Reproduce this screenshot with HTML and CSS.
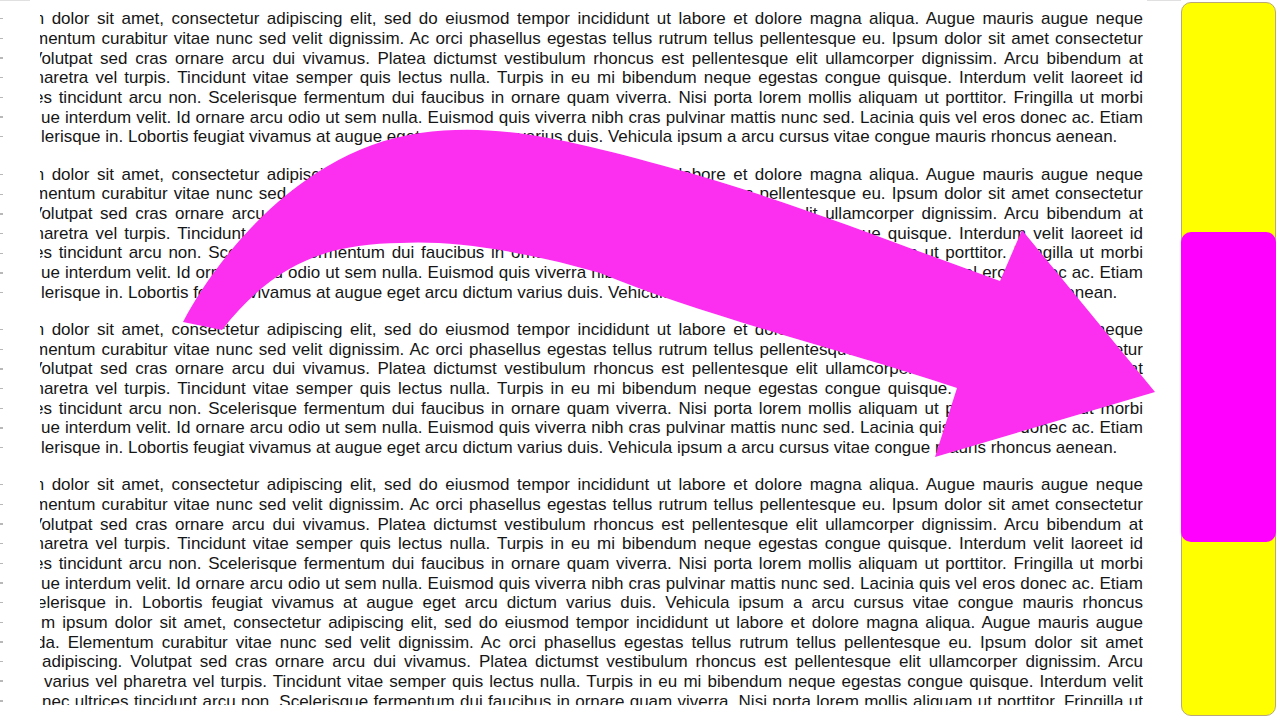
FILE: index.html
```html
<!DOCTYPE html>
<html lang="la">
<head>
<meta charset="utf-8">
<title>Scroll position</title>
<link rel="stylesheet" href="styles.css">
</head>
<body>
<div class="page">
  <div class="side">
    <div class="side-rule"></div>
    <div class="marks"></div>
    <div class="marks"></div>
    <div class="marks"></div>
    <div class="marks long"></div>
  </div>
  <main class="doc">
    <p class="para">
      <span class="ln s-10">m dolor sit amet, consectetur adipiscing elit, sed do eiusmod tempor incididunt ut labore et dolore magna aliqua. Augue mauris augue neque</span>
      <span class="ln s-6">mentum curabitur vitae nunc sed velit dignissim. Ac orci phasellus egestas tellus rutrum tellus pellentesque eu. Ipsum dolor sit amet consectetur</span>
      <span class="ln s-9">Volutpat sed cras ornare arcu dui vivamus. Platea dictumst vestibulum rhoncus est pellentesque elit ullamcorper dignissim. Arcu bibendum at</span>
      <span class="ln s-15">pharetra vel turpis. Tincidunt vitae semper quis lectus nulla. Turpis in eu mi bibendum neque egestas congue quisque. Interdum velit laoreet id</span>
      <span class="ln s-6">es tincidunt arcu non. Scelerisque fermentum dui faucibus in ornare quam viverra. Nisi porta lorem mollis aliquam ut porttitor. Fringilla ut morbi</span>
      <span class="ln s1">ue interdum velit. Id ornare arcu odio ut sem nulla. Euismod quis viverra nibh cras pulvinar mattis nunc sed. Lacinia quis vel eros donec ac. Etiam</span>
      <span class="ln end s1">lerisque in. Lobortis feugiat vivamus at augue eget arcu dictum varius duis. Vehicula ipsum a arcu cursus vitae congue mauris rhoncus aenean.</span>
    </p>
    <p class="para">
      <span class="ln s-10">m dolor sit amet, consectetur adipiscing elit, sed do eiusmod tempor incididunt ut labore et dolore magna aliqua. Augue mauris augue neque</span>
      <span class="ln s-6">mentum curabitur vitae nunc sed velit dignissim. Ac orci phasellus egestas tellus rutrum tellus pellentesque eu. Ipsum dolor sit amet consectetur</span>
      <span class="ln s-9">Volutpat sed cras ornare arcu dui vivamus. Platea dictumst vestibulum rhoncus est pellentesque elit ullamcorper dignissim. Arcu bibendum at</span>
      <span class="ln s-15">pharetra vel turpis. Tincidunt vitae semper quis lectus nulla. Turpis in eu mi bibendum neque egestas congue quisque. Interdum velit laoreet id</span>
      <span class="ln s-6">es tincidunt arcu non. Scelerisque fermentum dui faucibus in ornare quam viverra. Nisi porta lorem mollis aliquam ut porttitor. Fringilla ut morbi</span>
      <span class="ln s1">ue interdum velit. Id ornare arcu odio ut sem nulla. Euismod quis viverra nibh cras pulvinar mattis nunc sed. Lacinia quis vel eros donec ac. Etiam</span>
      <span class="ln end s1">lerisque in. Lobortis feugiat vivamus at augue eget arcu dictum varius duis. Vehicula ipsum a arcu cursus vitae congue mauris rhoncus aenean.</span>
    </p>
    <p class="para">
      <span class="ln s-10">m dolor sit amet, consectetur adipiscing elit, sed do eiusmod tempor incididunt ut labore et dolore magna aliqua. Augue mauris augue neque</span>
      <span class="ln s-6">mentum curabitur vitae nunc sed velit dignissim. Ac orci phasellus egestas tellus rutrum tellus pellentesque eu. Ipsum dolor sit amet consectetur</span>
      <span class="ln s-9">Volutpat sed cras ornare arcu dui vivamus. Platea dictumst vestibulum rhoncus est pellentesque elit ullamcorper dignissim. Arcu bibendum at</span>
      <span class="ln s-15">pharetra vel turpis. Tincidunt vitae semper quis lectus nulla. Turpis in eu mi bibendum neque egestas congue quisque. Interdum velit laoreet id</span>
      <span class="ln s-6">es tincidunt arcu non. Scelerisque fermentum dui faucibus in ornare quam viverra. Nisi porta lorem mollis aliquam ut porttitor. Fringilla ut morbi</span>
      <span class="ln s1">ue interdum velit. Id ornare arcu odio ut sem nulla. Euismod quis viverra nibh cras pulvinar mattis nunc sed. Lacinia quis vel eros donec ac. Etiam</span>
      <span class="ln end s1">lerisque in. Lobortis feugiat vivamus at augue eget arcu dictum varius duis. Vehicula ipsum a arcu cursus vitae congue mauris rhoncus aenean.</span>
    </p>
    <p class="para">
      <span class="ln s-10">m dolor sit amet, consectetur adipiscing elit, sed do eiusmod tempor incididunt ut labore et dolore magna aliqua. Augue mauris augue neque</span>
      <span class="ln s-6">mentum curabitur vitae nunc sed velit dignissim. Ac orci phasellus egestas tellus rutrum tellus pellentesque eu. Ipsum dolor sit amet consectetur</span>
      <span class="ln s-9">Volutpat sed cras ornare arcu dui vivamus. Platea dictumst vestibulum rhoncus est pellentesque elit ullamcorper dignissim. Arcu bibendum at</span>
      <span class="ln s-15">pharetra vel turpis. Tincidunt vitae semper quis lectus nulla. Turpis in eu mi bibendum neque egestas congue quisque. Interdum velit laoreet id</span>
      <span class="ln s-6">es tincidunt arcu non. Scelerisque fermentum dui faucibus in ornare quam viverra. Nisi porta lorem mollis aliquam ut porttitor. Fringilla ut morbi</span>
      <span class="ln s1">ue interdum velit. Id ornare arcu odio ut sem nulla. Euismod quis viverra nibh cras pulvinar mattis nunc sed. Lacinia quis vel eros donec ac. Etiam</span>
      <span class="ln s-3">elerisque in. Lobortis feugiat vivamus at augue eget arcu dictum varius duis. Vehicula ipsum a arcu cursus vitae congue mauris rhoncus</span>
      <span class="ln s1">m ipsum dolor sit amet, consectetur adipiscing elit, sed do eiusmod tempor incididunt ut labore et dolore magna aliqua. Augue mauris augue</span>
      <span class="ln s-4">da. Elementum curabitur vitae nunc sed velit dignissim. Ac orci phasellus egestas tellus rutrum tellus pellentesque eu. Ipsum dolor sit amet</span>
      <span class="ln s2">adipiscing. Volutpat sed cras ornare arcu dui vivamus. Platea dictumst vestibulum rhoncus est pellentesque elit ullamcorper dignissim. Arcu</span>
      <span class="ln s4">varius vel pharetra vel turpis. Tincidunt vitae semper quis lectus nulla. Turpis in eu mi bibendum neque egestas congue quisque. Interdum velit</span>
      <span class="ln s2">nec ultrices tincidunt arcu non. Scelerisque fermentum dui faucibus in ornare quam viverra. Nisi porta lorem mollis aliquam ut porttitor. Fringilla ut</span>
      <span class="ln s1">morbi tincidunt augue interdum velit. Id ornare arcu odio ut sem nulla. Euismod quis viverra nibh cras pulvinar mattis nunc sed. Lacinia quis vel</span>
    </p>
  </main>
  <div class="gutter"><div class="gutter-rule"></div></div>
  <div class="track"><div class="thumb"></div></div>
</div>
<svg class="arrow" width="1280" height="720" viewBox="0 0 1280 720" aria-hidden="true">
  <path fill="#fc2ef0" d="M183,322 C215,260 300,150 420,133 C500,122 570,140 690,173 C800,205 900,245 1000,281 L1022,230 L1155,392 L935,457 L957,388 C850,352 700,315 600,273 C520,250 450,240 400,243 C340,244 280,255 222,330 Z"/>
</svg>
</body>
</html>
```

FILE: styles.css
```css
html, body {
  margin: 0;
  padding: 0;
  background: #ffffff;
}

body {
  width: 1280px;
  height: 720px;
  overflow: hidden;
  font-family: "Liberation Sans", Arial, sans-serif;
}

.page {
  display: flex;
  align-items: flex-start;
  height: 720px;
}

.side {
  width: 40px;
  flex: none;
  display: flex;
  flex-direction: column;
}

.side-rule {
  width: 30px;
  height: 1px;
  background: #e0e0e0;
  margin-bottom: 8.3px;
}

.marks {
  width: 3px;
  height: 137.55px;
  margin-bottom: 17.75px;
  background: repeating-linear-gradient(to bottom,
    transparent 0, transparent 9px,
    #b8b8b8 9px, #b8b8b8 10.5px,
    transparent 10.5px, transparent 19.65px);
}

.marks.long {
  height: 235.8px;
}

.doc {
  width: 1103px;
  flex: none;
  height: 705px;
  overflow: hidden;
  box-sizing: border-box;
  padding-top: 9.3px;
  color: #161616;
  font-size: 17px;
  line-height: 19.65px;
}

.para {
  margin: 0 0 17.75px;
}

.ln {
  display: block;
  text-align: justify;
  text-align-last: justify;
}

.ln.end {
  text-align-last: left;
}

.s-15 { text-indent: -15px; }
.s-10 { text-indent: -10px; }
.s-9 { text-indent: -9px; }
.s-6 { text-indent: -6px; }
.s-4 { text-indent: -4px; }
.s-3 { text-indent: -3px; }
.s1 { text-indent: 1px; }
.s2 { text-indent: 2px; }
.s4 { text-indent: 4px; }

.gutter {
  width: 38px;
  flex: none;
}

.gutter-rule {
  margin-left: 4px;
  width: 34px;
  height: 1px;
  background: #e0e0e0;
}

.track {
  margin-top: 2px;
  width: 95px;
  height: 714px;
  flex: none;
  box-sizing: border-box;
  background: #ffff00;
  border: 1px solid #b9a77a;
  border-radius: 10px;
  display: flex;
  flex-direction: column;
}

.thumb {
  margin: 229px -1px 0;
  height: 310px;
  background: #ff00ff;
  border-radius: 10px;
}

.arrow {
  position: absolute;
  left: 0;
  top: 0;
  pointer-events: none;
}
```
